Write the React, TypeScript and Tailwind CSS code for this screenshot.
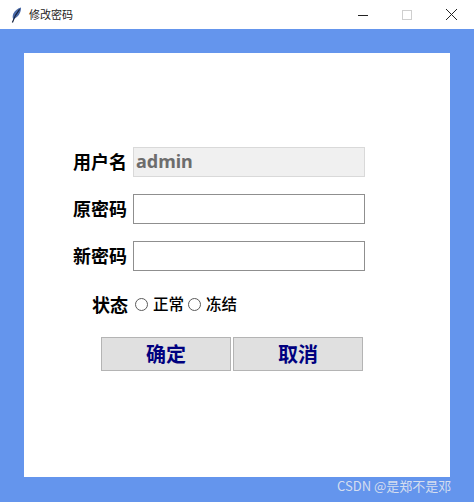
const cjk = "font-['Noto_Sans_CJK_SC','Noto_Sans',sans-serif]";

function Feather() {
  return (
    <svg width="12" height="16" viewBox="0 0 12 16" className="shrink-0">
      <path d="M11 .4C8 1 4.8 3.4 3.4 6.6 2.4 8.9 2.5 10.9 3.2 12 5.9 11.4 8.8 8.8 10.1 5.4 10.8 3.6 11.2 1.7 11 .4Z" fill="#4a6aa8" />
      <path d="M9.6 2.4C7.2 5.2 4.6 9 2.4 15.5" fill="none" stroke="#16233f" strokeWidth="1.2" />
    </svg>
  );
}

function FieldRow({ label, value, disabled }: { label: string; value?: string; disabled?: boolean }) {
  return (
    <div className="flex items-center">
      <div className="w-[54px] -translate-y-px text-[18px] leading-[30px] font-bold text-black whitespace-nowrap">{label}</div>
      <input
        readOnly
        value={value ?? ""}
        className={`ml-[6px] h-[30px] w-[232px] border px-[2px] pb-[2px] text-[18px] font-bold font-['Noto_Sans',sans-serif] outline-none ${
          disabled ? "border-[#d9d9d9] bg-[#f0f0f0] text-[#6d6d6d]" : "border-[#8f8f8f] bg-white text-black"
        }`}
      />
    </div>
  );
}

function Radio({ label }: { label: string }) {
  return (
    <label className="flex items-center">
      <span className="h-[13px] w-[13px] rounded-full border border-[#5a5a5a] bg-white" />
      <span className="ml-[5px] text-[15.5px] font-medium text-black">{label}</span>
    </label>
  );
}

export default function App() {
  return (
    <div className={`relative flex h-[502px] w-[474px] flex-col overflow-hidden bg-[#6495ed] ${cjk}`}>
      <div className="flex h-[29px] items-center bg-white pl-[10px]">
        <Feather />
        <span className="ml-[7px] text-[11px] text-[#222]">修改密码</span>
        <div className="ml-auto flex items-center">
          <svg width="12" height="12" viewBox="0 0 12 12" className="mr-[33px]">
            <path d="M1 6.5H11" stroke="#222" strokeWidth="1" />
          </svg>
          <div className="mr-[33px] h-[10px] w-[10px] border border-[#cfcfcf]" />
          <svg width="13" height="13" viewBox="0 0 13 13" className="mr-[16px]">
            <path d="M1 1L12 12M12 1L1 12" stroke="#222" strokeWidth="1" />
          </svg>
        </div>
      </div>

      <div className="mx-[24px] mt-[24px] h-[424px] w-[426px] bg-white pl-[49px] pt-[94px]">
        <div className="flex flex-col gap-[17px]">
          <FieldRow label="用户名" value="admin" disabled />
          <FieldRow label="原密码" />
          <FieldRow label="新密码" />
        </div>

        <div className="mt-[20px] flex h-[26px] items-center">
          <div className="w-[55px] text-right text-[18px] font-bold text-black">状态</div>
          <div className="ml-[7px] flex items-center gap-[4px]">
            <Radio label="正常" />
            <Radio label="冻结" />
          </div>
        </div>

        <div className="ml-[28px] mt-[20px] flex gap-[2px]">
          <button className="h-[34px] w-[130px] border border-[#b4b4b4] bg-[#e0e0e0] text-[20px] font-bold text-[#00007f]">确定</button>
          <button className="h-[34px] w-[130px] border border-[#b4b4b4] bg-[#e0e0e0] text-[20px] font-bold text-[#00007f]">取消</button>
        </div>
      </div>

      <div className="absolute left-[337px] top-[477px] text-[13px] leading-[18px] text-[#d5deef] whitespace-nowrap">CSDN @是郑不是邓</div>
    </div>
  );
}
